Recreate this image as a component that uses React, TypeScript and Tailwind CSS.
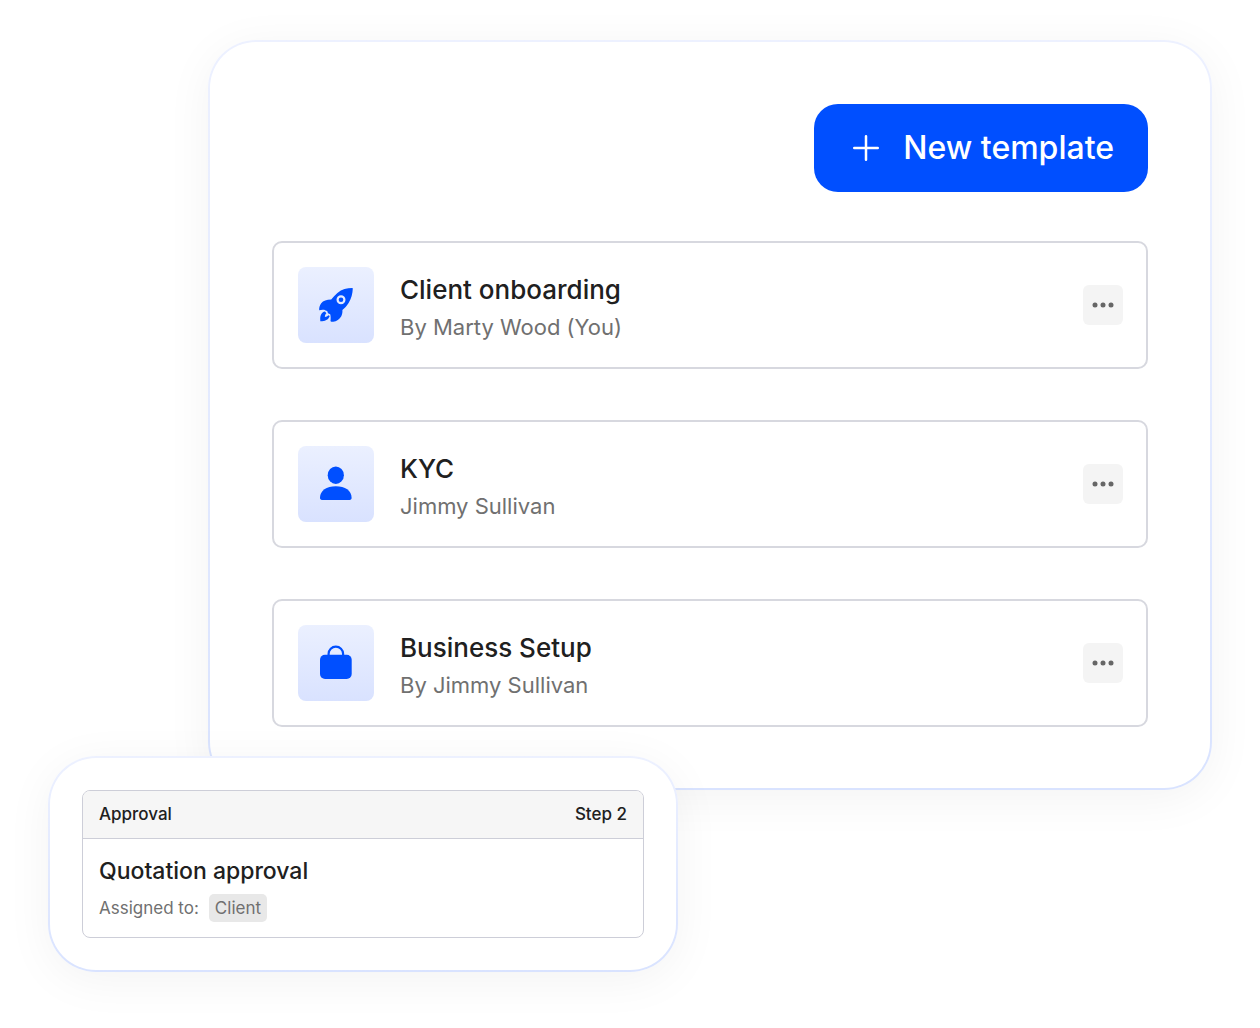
import React from 'react';

interface Template {
    id: string;
    name: string;
    author: string;
    icon: React.ReactNode;
}

const RocketIcon: React.FC = () => (
    <svg viewBox="0 0 40 40" className="w-10 h-10" fill="#004fff" aria-hidden="true">
        <path
            fillRule="evenodd"
            d="M36.2 3C31 3 25.8 4.2 21.4 8C19 10.1 17 12.3 15.2 14.5C10.5 14.6 7.3 15.6 5.2 18.3C3.6 20.5 3 23 3.2 25.3C4.8 24.7 6.4 24.5 8.2 24.8L9.6 25.6L11.2 25.9L12 28.2L14.2 29.3C14.8 31.3 14.8 33.6 14.5 36.1C14.6 36.7 15.5 36.9 17.2 36.7C20.5 36.3 23.7 34.2 25.3 31.2C26.2 29.4 26.6 27.3 26.4 25.1C28.6 23.2 30.8 20.8 32.6 18C35.4 13.7 36.6 8.6 36.8 3.6C36.8 3.2 36.6 3 36.2 3ZM25 10.2A4.5 4.5 0 1 1 25 19.2A4.5 4.5 0 1 1 25 10.2Z"
        />
        <circle cx="25" cy="14.7" r="2.3" />
        <path d="M8.9 26.4C6 26.9 4.4 29.7 4.2 33.2L4.3 36.2C8.4 36.3 12.5 34.9 13.7 30.9L12.3 30.2C11.4 31.4 10.3 31.9 8.9 31.9C8.8 30.4 9.3 29.2 10.4 28.2Z" />
    </svg>
);

const PersonIcon: React.FC = () => (
    <svg viewBox="0 0 40 40" className="w-10 h-10" fill="#004fff" aria-hidden="true">
        <ellipse cx="19.8" cy="11.2" rx="8.1" ry="8.7" />
        <path d="M4 33.8C4 26.7 10.5 22.3 19.8 22.3S35.6 26.7 35.6 33.8C35.6 35.1 35 35.9 33.6 35.9H6C4.6 35.9 4 35.1 4 33.8Z" />
    </svg>
);

const BagIcon: React.FC = () => (
    <svg viewBox="0 0 40 40" className="w-10 h-10" fill="#004fff" aria-hidden="true">
        <rect x="4" y="11.8" width="31.7" height="24.2" rx="5" />
        <path d="M12.6 13V10.8A7.25 7.25 0 0 1 27.1 10.8V13" fill="none" stroke="#004fff" strokeWidth="2.2" />
    </svg>
);

const PlusIcon: React.FC = () => (
    <svg viewBox="0 0 26 26" className="w-[26px] h-[26px]" stroke="white" strokeWidth="2.5" strokeLinecap="round" aria-hidden="true">
        <path d="M13 1.25V24.75M1.25 13H24.75" />
    </svg>
);

const DotsIcon: React.FC = () => (
    <svg viewBox="0 0 22 6" className="w-[22px] h-[6px]" fill="#666666" aria-hidden="true">
        <circle cx="3" cy="3" r="2.5" />
        <circle cx="11" cy="3" r="2.5" />
        <circle cx="19" cy="3" r="2.5" />
    </svg>
);

const TEMPLATES: Template[] = [
    { id: 'onboarding', name: 'Client onboarding', author: 'By Marty Wood (You)', icon: <RocketIcon /> },
    { id: 'kyc', name: 'KYC', author: 'Jimmy Sullivan', icon: <PersonIcon /> },
    { id: 'business', name: 'Business Setup', author: 'By Jimmy Sullivan', icon: <BagIcon /> },
];

// Two nested boxes give the border its vertical gradient
const GradientCard: React.FC<{ className: string; innerClassName: string; children: React.ReactNode }> = ({
    className,
    innerClassName,
    children,
}) => (
    <section
        className={`rounded-[48px] bg-linear-to-b from-[#edf1ff] to-[#d9e3ff] p-[2px] shadow-[0_8px_48px_rgba(0,0,0,0.05)] ${className}`}
    >
        <div className={`rounded-[46px] bg-white ${innerClassName}`}>{children}</div>
    </section>
);

const TemplateRow: React.FC<{ template: Template }> = ({ template }) => (
    <li className="flex items-center h-32 pl-6 pr-[23px] rounded-[10px] border-2 border-[#d7d8df] bg-white">
        <div className="flex items-center justify-center shrink-0 w-[76px] h-[76px] rounded-lg bg-linear-to-b from-[#ebf0ff] to-[#d9e2ff]">
            {template.icon}
        </div>
        <div className="ml-[26px] flex-1 pt-1.5">
            <h2 className="text-[26px] leading-[38px] font-medium text-[#202020]">{template.name}</h2>
            <p className="text-[22px] leading-9 text-[#707070]">{template.author}</p>
        </div>
        <button
            type="button"
            aria-label={`Options for ${template.name}`}
            className="flex items-center justify-center w-10 h-10 rounded-md bg-[#f4f4f4]"
        >
            <DotsIcon />
        </button>
    </li>
);

const App: React.FC = () => {
    return (
        <main className="min-h-screen bg-white px-12 pt-10 pb-14 font-['Inter',sans-serif]">
            <GradientCard className="ml-40" innerClassName="p-[62px] pb-[61px]">
                <div className="flex justify-end">
                    <button
                        type="button"
                        className="flex items-center gap-6 h-[88px] pl-[39px] pr-[34px] rounded-3xl bg-[#004fff] text-white text-[32px] font-medium"
                    >
                        <PlusIcon />
                        New template
                    </button>
                </div>
                <ul className="mt-[49px] flex flex-col gap-[51px]">
                    {TEMPLATES.map(template => (
                        <TemplateRow key={template.id} template={template} />
                    ))}
                </ul>
            </GradientCard>

            <GradientCard className="relative -mt-[34px] w-[630px] max-w-full" innerClassName="p-8">
                <div className="rounded-lg border border-[#cdced8] overflow-hidden">
                    <div className="flex items-center justify-between h-12 px-4 bg-[#f6f6f6] border-b border-[#cdced8] text-[17px] font-medium text-[#202020]">
                        <span>Approval</span>
                        <span>Step 2</span>
                    </div>
                    <div className="px-4 pt-4 pb-[15px]">
                        <h3 className="text-[23px] leading-8 font-medium text-[#202020]">Quotation approval</h3>
                        <p className="mt-[7px] flex items-center gap-[10px] text-[17px] leading-7 text-[#707070]">
                            Assigned to:
                            <span className="px-[6px] rounded-[5px] bg-[#e8e8e8]">Client</span>
                        </p>
                    </div>
                </div>
            </GradientCard>
        </main>
    );
};

export default App;
